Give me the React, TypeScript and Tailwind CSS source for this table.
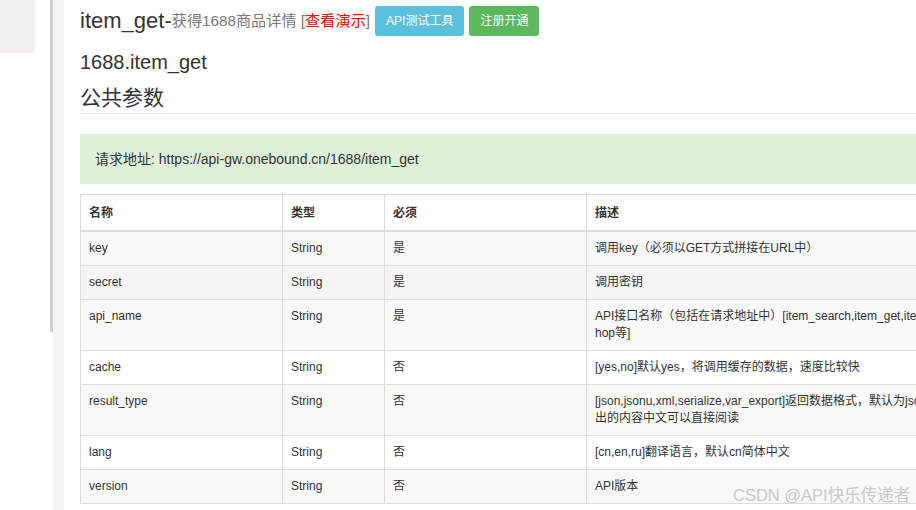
import React from "react";

const rows: { name: string; type: string; req: string; desc: string; bg: string }[] = [
  { name: "key", type: "String", req: "是", desc: "调用key（必须以GET方式拼接在URL中）", bg: "bg-[#f9f9f9]" },
  { name: "secret", type: "String", req: "是", desc: "调用密钥", bg: "bg-[#f5f5f5]" },
  {
    name: "api_name",
    type: "String",
    req: "是",
    desc: "API接口名称（包括在请求地址中）[item_search,item_get,item_search_shop等]",
    bg: "bg-[#f9f9f9]",
  },
  { name: "cache", type: "String", req: "否", desc: "[yes,no]默认yes，将调用缓存的数据，速度比较快", bg: "bg-white" },
  {
    name: "result_type",
    type: "String",
    req: "否",
    desc: "[json,jsonu,xml,serialize,var_export]返回数据格式，默认为json，jsonu输出的内容中文可以直接阅读",
    bg: "bg-[#f9f9f9]",
  },
  { name: "lang", type: "String", req: "否", desc: "[cn,en,ru]翻译语言，默认cn简体中文", bg: "bg-white" },
  { name: "version", type: "String", req: "否", desc: "API版本", bg: "bg-[#f9f9f9]" },
];

export default function App() {
  return (
    <div className="relative flex h-[510px] w-[916px] overflow-hidden bg-white font-['Liberation_Sans','Noto_Sans_CJK_SC',sans-serif] text-[#333]">
      {/* left sidebar remnant */}
      <div className="w-[50px] shrink-0">
        <div className="h-[53px] w-[35px] bg-[#f2efee]" />
      </div>
      <div className="w-[3px] shrink-0">
        <div className="h-[332px] w-full bg-[#d0d0d0]" />
      </div>
      <div className="h-full w-[11px] shrink-0 bg-[#f4f4f4]" />
      <div className="w-[16px] shrink-0" />

      {/* main */}
      <div className="min-w-0 flex-1">
        <div className="w-[1000px]">
          <div className="flex h-[42px] items-center pb-[1px]">
            <span className="text-[22px] leading-none">item_get-</span>
            <span className="text-[15.2px] leading-none text-[#777]">
              获得1688商品详情 [<span className="text-[#ff0000]">查看演示</span>]
            </span>
            <span className="ml-[5px] rounded-[3px] bg-[#5bc0de] px-[11px] py-[6px] text-[12px] leading-[18px] text-white">
              API测试工具
            </span>
            <span className="ml-[5px] rounded-[3px] bg-[#5cb85c] px-[11px] py-[6px] text-[12px] leading-[18px] text-white">
              注册开通
            </span>
          </div>
          <div className="mt-[9px] text-[20px] leading-[22px]">1688.item_get</div>
          <div className="mt-[12px] text-[21px] leading-[26px]">公共参数</div>
          <div className="mt-[2px] h-px w-full bg-[#e5e5e5]" />

          <div className="mt-[20px] h-[50px] bg-[#dff0d8] px-[15px] text-[14px] leading-[50px] text-[#333]">
            请求地址: https://api-gw.onebound.cn/1688/item_get
          </div>

          <table className="mt-[10px] table-fixed border-collapse text-[12px] leading-[17px]">
            <colgroup>
              <col className="w-[202px]" />
              <col className="w-[102px]" />
              <col className="w-[202px]" />
              <col className="w-[407px]" />
            </colgroup>
            <thead>
              <tr className="bg-white">
                <th className="border border-b-2 border-[#dddddd] px-[8px] pt-[10px] pb-[8px] text-left font-bold">名称</th>
                <th className="border border-b-2 border-[#dddddd] px-[8px] pt-[10px] pb-[8px] text-left font-bold">类型</th>
                <th className="border border-b-2 border-[#dddddd] px-[8px] pt-[10px] pb-[8px] text-left font-bold">必须</th>
                <th className="border border-b-2 border-[#dddddd] px-[8px] pt-[10px] pb-[8px] text-left font-bold">描述</th>
              </tr>
            </thead>
            <tbody>
              {rows.map((r) => (
                <tr key={r.name} className={r.bg}>
                  <td className="border border-[#dddddd] p-[8px] align-top">{r.name}</td>
                  <td className="border border-[#dddddd] p-[8px] align-top">{r.type}</td>
                  <td className="border border-[#dddddd] p-[8px] align-top">{r.req}</td>
                  <td className="border border-[#dddddd] p-[8px] align-top break-all">{r.desc}</td>
                </tr>
              ))}
            </tbody>
          </table>
        </div>
      </div>

      {/* watermark */}
      <div className="pointer-events-none absolute left-[733px] top-[484px] text-[16.5px] leading-[22px] text-[#c4c4c4] opacity-90">
        CSDN @API快乐传递者
      </div>
    </div>
  );
}
